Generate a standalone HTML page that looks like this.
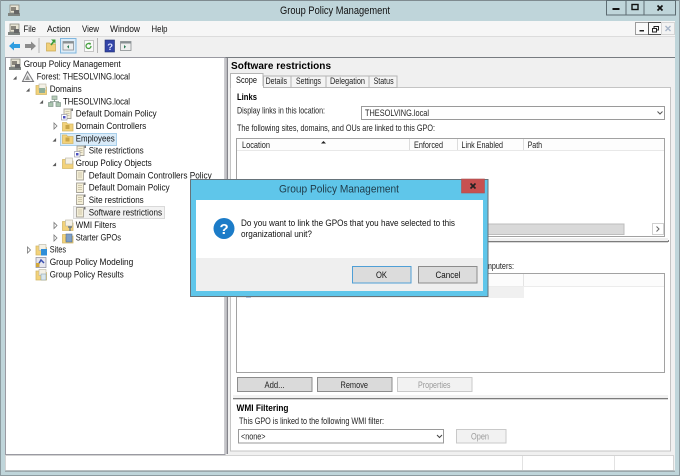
<!DOCTYPE html>
<html><head><meta charset="utf-8"><title>Group Policy Management</title>
<style>
html,body{margin:0;padding:0;width:680px;height:476px;overflow:hidden;background:#bfd5da}
svg{display:block;filter:blur(0.35px)}
text{font-family:"Liberation Sans",sans-serif;font-size:9.600px;fill:#111}
.b{font-weight:bold;fill:#000}
.s{font-size:9.100px;fill:#222}
</style></head><body>
<svg width="680" height="476" viewBox="0 0 680 476" xmlns="http://www.w3.org/2000/svg">
<defs>
<g id="gpm"><rect x="2" y="0" width="9" height="8" fill="#e8e4d4" stroke="#8a8a80" stroke-width=".8"/><rect x="3" y="2" width="5" height="4" fill="#8a867c"/><rect x="0" y="8" width="12" height="3" fill="#7f8480"/><rect x="6" y="5" width="5" height="4" fill="#666"/></g>
<g id="folder"><path d="M0.500 2.500h4l1 1.500h5.500v7h-10.500z" fill="#f3d27a" stroke="#d4b868" stroke-width=".8"/><rect x="3.500" y="5" width="4" height="4" fill="#c9a548"/></g>
<g id="folderopen"><path d="M0.500 2h4l1 1.500h5.500v7.500h-10.500z" fill="#f3d27a" stroke="#d4b868" stroke-width=".8"/><rect x="3.500" y="0.500" width="7" height="6" fill="#f4f1e6" stroke="#b8b4a0" stroke-width=".6"/></g>
<g id="gpo"><path d="M2.500 0.500h7v9.500h-7z" fill="#f4efd8" stroke="#a8a49a" stroke-width=".9"/><path d="M4 3h4M4 5h4M4 7h4" stroke="#c2bb9c" stroke-width=".7"/><rect x="10" y="0" width="1.500" height="2.500" fill="#777"/></g>
<g id="link"><use href="#gpo"/><rect x="0" y="6" width="5.500" height="5.500" fill="#fff" stroke="#8a8aa0" stroke-width=".6"/><rect x="1.500" y="7.500" width="2.500" height="2.500" fill="#4a4ec0"/></g>
<g id="domain"><rect x="3.500" y="0" width="5" height="3.500" fill="#b7cbb8" stroke="#82988c" stroke-width=".7"/><rect x="0" y="6.500" width="4.500" height="4" fill="#a9c4ad" stroke="#82988c" stroke-width=".7"/><rect x="7.500" y="6.500" width="4.500" height="4" fill="#a9c4ad" stroke="#82988c" stroke-width=".7"/><path d="M6 3.500v2M2 6.500v-1h8v1" fill="none" stroke="#82988c" stroke-width=".8"/></g>
<path id="exp" d="M0 3.600L3.600 3.600L3.600 0z" fill="#5a5a5a"/>
<path id="col" d="M0.500 0L3.500 3L0.500 6z" fill="#fff" stroke="#777" stroke-width=".8"/>
</defs>

<!-- window frame -->
<rect width="680" height="476" fill="#bfd5da"/>
<rect width="680" height="1" fill="#7f8b90"/>
<rect x="0" y="0" width="1" height="476" fill="#8d9ba0"/>
<rect x="679" y="0" width="1" height="476" fill="#8d9ba0"/>
<rect y="475" width="680" height="1" fill="#8d9ba0"/>
<use href="#gpm" x="8" y="5"/>
<text x="280" y="14" textLength="110" lengthAdjust="spacingAndGlyphs" style="font-size:10.800px">Group Policy Management</text>

<!-- caption buttons -->
<rect x="606.500" y="0.500" width="69" height="14.500" fill="none" stroke="#5d6c72"/>
<path d="M626 0v15M644 0v15" stroke="#5d6c72"/>
<rect x="612.500" y="8" width="7" height="2" fill="#111"/>
<rect x="632" y="4.500" width="6" height="5" fill="none" stroke="#111" stroke-width="1.400"/>
<path d="M657.500 5.500l5 5M662.500 5.500l-5 5" stroke="#111" stroke-width="1.700"/>

<!-- client -->
<rect x="5" y="21" width="670" height="450" fill="#f0f0f0"/>
<rect x="5" y="21" width="670" height="15" fill="#f6f6f6"/>
<rect x="5" y="36" width="670" height="1" fill="#dcdcdc"/>
<rect x="5" y="57" width="670" height="1" fill="#777b80"/>
<use href="#gpm" x="8" y="24"/>
<text x="23.500" y="32" textLength="12.500" lengthAdjust="spacingAndGlyphs">File</text>
<text x="47" y="32" textLength="23.500" lengthAdjust="spacingAndGlyphs">Action</text>
<text x="82" y="32" textLength="17" lengthAdjust="spacingAndGlyphs">View</text>
<text x="110" y="32" textLength="30" lengthAdjust="spacingAndGlyphs">Window</text>
<text x="151.500" y="32" textLength="16" lengthAdjust="spacingAndGlyphs">Help</text>

<!-- MDI buttons -->
<rect x="635.500" y="22.500" width="13" height="12" fill="#fafafa" stroke="#9c9c9c"/>
<rect x="648.500" y="22.500" width="13" height="12" fill="#fafafa" stroke="#555"/>
<rect x="661.500" y="22.500" width="13" height="12" fill="#f3f3f3" stroke="#d5d5d5"/>
<rect x="639.500" y="30" width="4.500" height="1.500" fill="#222"/>
<path d="M652.500 28.500h4v3.500h-4zM654 28v-1.500h4.500v3.500h-2" fill="none" stroke="#222" stroke-width="1"/>
<path d="M665.500 26l5 5M670.500 26l-5 5" stroke="#a7b5c8" stroke-width="1.400"/>

<!-- toolbar -->
<path d="M9 46l5-4.500v2.500h6v4h-6v2.500z" fill="#2f9de0"/>
<path d="M36 46l-5-4.500v2.500h-6v4h6v2.500z" fill="#8b8b8b"/>
<rect x="38.500" y="38" width="1" height="15" fill="#b5b5b5"/>
<path d="M46.500 43h3l1 1h5v7h-9z" fill="#f1d07a" stroke="#c9a850" stroke-width=".7"/>
<path d="M51 45l3-4" stroke="#3d9b3a" stroke-width="1.600"/><path d="M51 39.500h4.500v4z" fill="#3d9b3a"/>
<rect x="60.500" y="38.500" width="15.500" height="14.500" fill="#dcecf8" stroke="#7fb6de"/>
<rect x="63" y="41.500" width="10.500" height="8.500" fill="#eee" stroke="#8a8f92" stroke-width=".8"/>
<rect x="63" y="41.500" width="10.500" height="2" fill="#888f92"/>
<path d="M69 45l-2 1.800 2 1.800z" fill="#2a7a55"/>
<rect x="84.500" y="40.500" width="9" height="11" fill="#fafafa" stroke="#c4c4c4"/>
<path d="M91 46a2.500 2.500 0 1 1-1-2" fill="none" stroke="#47a03f" stroke-width="1.300"/>
<path d="M88.500 42.500l2.500.5-.8 2.500z" fill="#47a03f"/>
<rect x="97" y="38" width="1" height="15" fill="#b5b5b5"/>
<rect x="105" y="40" width="9.500" height="12" fill="#3345a8" stroke="#20306f" stroke-width=".6"/>
<text x="107.200" y="50" style="font-size:9.500px;font-weight:bold;fill:#dfe6ff">?</text>
<rect x="120.500" y="41.500" width="10.500" height="9" fill="#eee" stroke="#8a8f92" stroke-width=".8"/>
<rect x="120.500" y="41.500" width="10.500" height="2" fill="#888f92"/>
<path d="M124 45l2 1.800-2 1.800z" fill="#2a7a55"/>

<!-- tree pane -->
<rect x="5.500" y="57.500" width="219.500" height="397" fill="#fff" stroke="#9a9aa2"/>
<rect x="226.500" y="58" width="1.500" height="396" fill="#85858c"/>

<use href="#gpm" x="9" y="59"/>
<text x="23.700" y="67" textLength="97" lengthAdjust="spacingAndGlyphs">Group Policy Management</text>
<use href="#exp" x="13" y="76"/>
<path d="M27.500 71.500l6 10h-11z" fill="#f2f2f2" stroke="#77777a" stroke-width="1"/><path d="M27.500 75l-2.500 5h5z" fill="#9a9a9a"/>
<text x="36.700" y="79.500" textLength="93.300" lengthAdjust="spacingAndGlyphs">Forest: THESOLVING.local</text>
<use href="#exp" x="26" y="88"/>
<use href="#folderopen" x="35.500" y="83.500"/>
<rect x="39" y="88" width="6" height="5" fill="#8fae98"/>
<text x="49.700" y="92" textLength="32" lengthAdjust="spacingAndGlyphs">Domains</text>
<use href="#exp" x="39.500" y="100"/>
<use href="#domain" x="48.500" y="96"/>
<text x="63" y="104.300" textLength="67" lengthAdjust="spacingAndGlyphs">THESOLVING.local</text>
<use href="#link" x="61.500" y="108.500"/>
<text x="75.700" y="116.700" textLength="81" lengthAdjust="spacingAndGlyphs">Default Domain Policy</text>
<use href="#col" x="53.500" y="123"/>
<use href="#folder" x="62" y="120"/>
<text x="75.700" y="129" textLength="70.600" lengthAdjust="spacingAndGlyphs">Domain Controllers</text>
<rect x="60.500" y="133.500" width="56" height="12" fill="#d9ebf9" stroke="#a8cfea"/>
<use href="#exp" x="52.500" y="138"/>
<use href="#folder" x="62" y="132.500"/>
<text x="75.700" y="141.300" textLength="39" lengthAdjust="spacingAndGlyphs">Employees</text>
<use href="#link" x="74.500" y="145.500"/>
<text x="88.700" y="153.700" textLength="55" lengthAdjust="spacingAndGlyphs">Site restrictions</text>
<use href="#exp" x="52.500" y="162.500"/>
<use href="#folderopen" x="62" y="157.500"/>
<text x="75.700" y="166" textLength="76" lengthAdjust="spacingAndGlyphs">Group Policy Objects</text>
<use href="#gpo" x="74" y="170"/>
<text x="88.700" y="178.300" textLength="123" lengthAdjust="spacingAndGlyphs">Default Domain Controllers Policy</text>
<use href="#gpo" x="74" y="182.500"/>
<text x="88.700" y="190.700" textLength="81" lengthAdjust="spacingAndGlyphs">Default Domain Policy</text>
<use href="#gpo" x="74" y="194.500"/>
<text x="88.700" y="203" textLength="55" lengthAdjust="spacingAndGlyphs">Site restrictions</text>
<rect x="73.500" y="206.500" width="91" height="12" fill="#f2f2f2" stroke="#d9d9d9"/>
<use href="#gpo" x="74" y="207"/>
<text x="88.700" y="215.300" textLength="73.300" lengthAdjust="spacingAndGlyphs">Software restrictions</text>
<use href="#col" x="53.500" y="222.500"/>
<use href="#folderopen" x="62" y="219.500"/>
<path d="M68 227h4M70 227v4" stroke="#5a6f8a" stroke-width="1.200"/>
<text x="75.700" y="228" textLength="40.300" lengthAdjust="spacingAndGlyphs">WMI Filters</text>
<use href="#col" x="53.500" y="235"/>
<use href="#folder" x="62" y="232"/>
<rect x="66" y="234" width="6" height="8" fill="#7f9fc4" stroke="#53708f" stroke-width=".6"/>
<text x="75.700" y="240.500" textLength="45.300" lengthAdjust="spacingAndGlyphs">Starter GPOs</text>
<use href="#col" x="27" y="247"/>
<use href="#folderopen" x="35.500" y="244"/>
<rect x="41" y="249" width="6" height="6.500" fill="#2f8ed8"/>
<text x="49.700" y="252.700" textLength="16.300" lengthAdjust="spacingAndGlyphs">Sites</text>
<rect x="36" y="257.500" width="10" height="10" fill="#e6e6ee" stroke="#88889a" stroke-width=".7"/>
<path d="M38 265l3-5 3 3" fill="none" stroke="#3a4fb0" stroke-width="1.500"/><rect x="36" y="263" width="3.500" height="4" fill="#d2a83a"/>
<text x="49.700" y="265" textLength="83.600" lengthAdjust="spacingAndGlyphs">Group Policy Modeling</text>
<use href="#folderopen" x="35.500" y="269"/>
<rect x="41" y="274" width="5" height="6" fill="#d9e6ec" stroke="#7f98a8" stroke-width=".5"/>
<text x="49.700" y="277.500" textLength="74" lengthAdjust="spacingAndGlyphs">Group Policy Results</text>

<!-- status bar -->
<rect x="5.500" y="455.500" width="668" height="15" fill="#fff" stroke="#d3d3d3"/>
<path d="M522.500 456v14M614.500 456v14" stroke="#e2e2e2"/>
<rect x="5" y="470.500" width="670" height="1.500" fill="#9ba8ac"/>

<!-- right pane -->
<text x="231" y="69" class="b" textLength="100" style="font-size:10px">Software restrictions</text>
<rect x="230.500" y="87.500" width="440" height="363.500" fill="#fff" stroke="#c4c4c4"/>
<g fill="#f4f4f4" stroke="#b5b5b5">
<rect x="263.500" y="76" width="27.500" height="11.500"/><rect x="291" y="76" width="35" height="11.500"/><rect x="326" y="76" width="43" height="11.500"/><rect x="369" y="76" width="28" height="11.500"/>
</g>
<path d="M230.500 88v-14.500h32.500v14.500" fill="#fff" stroke="#b5b5b5"/><rect x="231" y="86" width="32" height="3" fill="#fff"/>
<text x="236" y="83" textLength="21" lengthAdjust="spacingAndGlyphs">Scope</text>
<text x="265.600" y="84" class="s" textLength="21.400" lengthAdjust="spacingAndGlyphs">Details</text>
<text x="296" y="84" class="s" textLength="25" lengthAdjust="spacingAndGlyphs">Settings</text>
<text x="330" y="84" class="s" textLength="35" lengthAdjust="spacingAndGlyphs">Delegation</text>
<text x="373.600" y="84" class="s" textLength="20" lengthAdjust="spacingAndGlyphs">Status</text>
<text x="237" y="100" class="b" textLength="20" lengthAdjust="spacingAndGlyphs" style="font-size:9px">Links</text>
<text x="237" y="113.500" class="s" textLength="88" lengthAdjust="spacingAndGlyphs">Display links in this location:</text>
<rect x="361.500" y="106.500" width="303" height="13" fill="#fff" stroke="#9a9a9a"/>
<text x="365" y="116" class="s" textLength="64" lengthAdjust="spacingAndGlyphs">THESOLVING.local</text>
<path d="M657.500 111.500l2.500 2.500 2.500-2.500" fill="none" stroke="#555" stroke-width="1"/>
<text x="237" y="131" class="s" textLength="198" lengthAdjust="spacingAndGlyphs">The following sites, domains, and OUs are linked to this GPO:</text>

<!-- links list -->
<rect x="236.500" y="138.500" width="428" height="98" fill="#fff" stroke="#a2a2a2"/>
<rect x="237" y="139" width="427" height="11" fill="#fdfdfd"/>
<path d="M237 150.500h427" stroke="#e8e8e8"/>
<path d="M409.500 139v11M457.500 139v11M523.500 139v11" stroke="#dcdcdc"/>
<text x="242" y="148" class="s" textLength="28" lengthAdjust="spacingAndGlyphs">Location</text>
<path d="M321 143.500l2.500-2.500 2.500 2.500z" fill="#222"/>
<text x="414" y="148" class="s" textLength="29" lengthAdjust="spacingAndGlyphs">Enforced</text>
<text x="461.500" y="148" class="s" textLength="41.500" lengthAdjust="spacingAndGlyphs">Link Enabled</text>
<text x="527.600" y="148" class="s" textLength="14.500" lengthAdjust="spacingAndGlyphs">Path</text>
<rect x="237" y="223" width="427" height="12" fill="#fff"/>
<rect x="237" y="224" width="387" height="10.500" fill="#d9d9d9" stroke="#bdbdbd"/>
<rect x="652.500" y="223.500" width="11" height="11" fill="#fff" stroke="#d0d0d0"/>
<path d="M656.500 226.500l2.500 2.500-2.500 2.500" fill="none" stroke="#666" stroke-width="1"/>

<!-- splitter -->
<rect x="233" y="238" width="435" height="3" fill="#f0f0f0"/>
<rect x="233" y="241" width="435" height="1.300" fill="#7c7c7c"/>
<rect x="668" y="240" width="1" height="2" fill="#888"/>

<!-- security filtering -->
<text x="237" y="269" class="s" textLength="277" lengthAdjust="spacingAndGlyphs">The settings in this GPO can only apply to the following groups, users, and computers:</text>
<rect x="236.500" y="273.500" width="428" height="99" fill="#fff" stroke="#a2a2a2"/>
<rect x="237" y="274" width="427" height="12" fill="#fcfcfc"/>
<path d="M237 286.500h427" stroke="#ececec"/>
<path d="M523.500 274v12" stroke="#e4e4e4"/>
<rect x="237" y="287" width="287" height="11" fill="#f0f0f0"/>
<rect x="246" y="292" width="5" height="5.500" fill="#6e93c9"/>

<!-- buttons -->
<rect x="237.500" y="377.500" width="74.500" height="14" fill="#dadada" stroke="#8c8c8c"/>
<text x="264.500" y="388" class="s" textLength="20" lengthAdjust="spacingAndGlyphs">Add...</text>
<rect x="317.500" y="377.500" width="74.500" height="14" fill="#dadada" stroke="#8c8c8c"/>
<text x="340.500" y="388" class="s" textLength="27.500" lengthAdjust="spacingAndGlyphs">Remove</text>
<rect x="397.500" y="377.500" width="74.500" height="14" fill="#f2f2f2" stroke="#c9c9c9"/>
<text x="418" y="388" class="s" textLength="32.500" lengthAdjust="spacingAndGlyphs" style="fill:#9a9a9a">Properties</text>
<rect x="233" y="395" width="435" height="3" fill="#f2f2f2"/>
<rect x="233" y="398" width="435" height="1.300" fill="#7c7c7c"/>

<text x="236.500" y="411" class="b" textLength="52" lengthAdjust="spacingAndGlyphs" style="font-size:9px">WMI Filtering</text>
<text x="239" y="424" class="s" textLength="145" lengthAdjust="spacingAndGlyphs">This GPO is linked to the following WMI filter:</text>
<rect x="238.500" y="429.500" width="205" height="13.500" fill="#fff" stroke="#9a9a9a"/>
<text x="241" y="439.500" class="s" textLength="24.500" lengthAdjust="spacingAndGlyphs">&lt;none&gt;</text>
<path d="M437 435l2.500 2.500 2.500-2.500" fill="none" stroke="#444" stroke-width="1"/>
<rect x="456.500" y="429.500" width="49.500" height="13.500" fill="#f2f2f2" stroke="#c9c9c9"/>
<text x="471" y="439.500" class="s" textLength="18" lengthAdjust="spacingAndGlyphs" style="fill:#9a9a9a">Open</text>

<!-- dialog -->
<rect x="190.500" y="179.500" width="297.500" height="117" fill="#5fc6ea" stroke="#66737a"/>
<rect x="196" y="200" width="287" height="58" fill="#fff"/>
<rect x="196" y="258" width="287" height="33" fill="#efefef"/>
<text x="279" y="192.500" textLength="120" lengthAdjust="spacingAndGlyphs" style="font-size:10.800px;fill:#1f3a48">Group Policy Management</text>
<rect x="461.500" y="179" width="23" height="14" fill="#c75050" stroke="#a85050" stroke-width=".6"/>
<path d="M470.500 183.500l5 5M475.500 183.500l-5 5" stroke="#222" stroke-width="1.600"/>
<circle cx="224" cy="228.500" r="10.500" fill="#1c7cc8"/>
<text x="219.500" y="234" style="font-size:15px;font-weight:bold;fill:#fff">?</text>
<text x="241" y="226" textLength="214" lengthAdjust="spacingAndGlyphs">Do you want to link the GPOs that you have selected to this</text>
<text x="241" y="237" textLength="71" lengthAdjust="spacingAndGlyphs">organizational unit?</text>
<rect x="352.500" y="266.500" width="58.500" height="16.500" fill="#dcdcdc" stroke="#4f9fd6"/>
<text x="376" y="278" textLength="11" lengthAdjust="spacingAndGlyphs">OK</text>
<rect x="418.500" y="266.500" width="58.500" height="16.500" fill="#dcdcdc" stroke="#8c8c8c"/>
<text x="435.500" y="278" textLength="25" lengthAdjust="spacingAndGlyphs">Cancel</text>
</svg>
</body></html>
